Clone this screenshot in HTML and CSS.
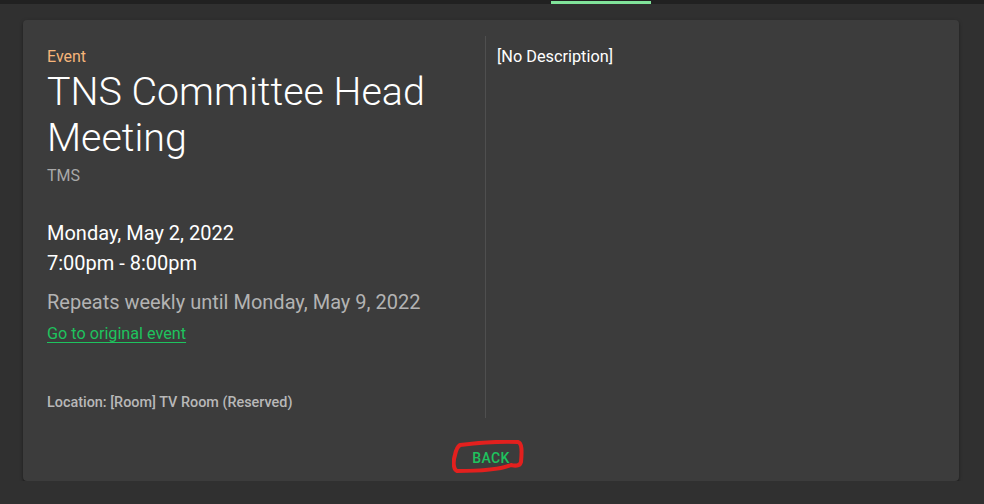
FILE: index.html
```html
<!DOCTYPE html>
<html>
<head>
    <title>TNS Committee Head Meeting</title>
    <link rel="stylesheet" href="styles.css">
</head>
<body>
    <div class="topbar">
        <div class="tab-indicator"></div>
    </div>

    <div class="page">
        <div class="card">
            <div class="card-row">
                <div class="col-left">
                    <div class="kind">Event</div>
                    <h1 class="title">TNS Committee Head Meeting</h1>
                    <div class="org">TMS</div>

                    <div class="date">Monday, May 2, 2022</div>
                    <div class="time">7:00pm - 8:00pm</div>
                    <div class="repeats">Repeats weekly until Monday, May 9, 2022</div>
                    <a class="orig-link" href="#">Go to original event</a>

                    <div class="location">Location: [Room] TV Room (Reserved)</div>
                </div>
                <div class="col-right">
                    <div class="desc">[No Description]</div>
                </div>
            </div>

            <div class="card-actions">
                <button class="btn-back">Back</button>
            </div>

            <svg class="scribble" width="74" height="36" viewBox="0 0 74 36">
                <path d="M8 5 C 25 3, 48 1, 66 2 C 70 3, 70 11, 69 22 C 68 26, 63 26, 59 25 C 50 29, 30 31, 5 31 C 1 29, 1 21, 3 15 C 4 10, 5 7, 8 5"
                      fill="none" stroke="#e3201e" stroke-width="4" stroke-linecap="round" stroke-linejoin="round"/>
            </svg>
        </div>
    </div>
</body>
</html>
```

FILE: styles.css
```css
body {
    margin: 0;
    background: #303030;
    font-family: Roboto, "Noto Sans", Arial, sans-serif;
    color: #fff;
}
.topbar {
    height: 4px;
    background: #212121;
    padding-top: 1px;
    box-sizing: border-box;
}
.tab-indicator {
    margin-left: 551px;
    width: 100px;
    height: 3px;
    background: #80e39a;
}
.page {
    padding: 16px 25px 0 23px;
}
.card {
    position: relative;
    background: #3c3c3c;
    border-radius: 4px;
    padding: 16px 24px 5px 24px;
    box-shadow: 0 2px 2px rgba(0, 0, 0, 0.35), 0 1px 4px rgba(0, 0, 0, 0.2);
}
.card-row {
    display: flex;
    height: 382px;
}
.col-left {
    width: 438px;
    padding-top: 9px;
    border-right: 1px solid #4f4f4f;
    display: flex;
    flex-direction: column;
    align-items: flex-start;
}
.col-right {
    flex: 1;
    padding: 9px 0 0 11px;
}
.kind {
    font-size: 16px;
    line-height: 24px;
    color: #f6b57a;
}
.title {
    margin: 0;
    font-size: 39.4px;
    font-weight: 300;
    line-height: 46px;
    color: #fff;
}
.org {
    margin-top: 3px;
    font-size: 16px;
    line-height: 24px;
    color: #a8a8a8;
}
.date {
    margin-top: 30px;
    font-size: 20px;
    line-height: 30px;
    color: #fff;
}
.time {
    font-size: 20px;
    line-height: 30px;
    color: #fff;
}
.repeats {
    margin-top: 9px;
    font-size: 20px;
    line-height: 30px;
    color: #b3b3b3;
}
.orig-link {
    margin-top: 5px;
    font-size: 16.2px;
    line-height: 24px;
    color: #1ec35e;
    text-decoration: underline;
    text-decoration-thickness: 1px;
    text-underline-offset: 3px;
}
.location {
    margin-top: 47px;
    font-size: 14.4px;
    line-height: 20px;
    font-weight: 500;
    color: #b8b8b8;
}
.desc {
    font-size: 16.3px;
    line-height: 24px;
    color: #fff;
}
.card-actions {
    display: flex;
    justify-content: center;
    margin-top: 22px;
}
.btn-back {
    height: 36px;
    padding: 0 16px;
    background: none;
    border: none;
    font-family: Roboto, "Noto Sans", Arial, sans-serif;
    font-size: 14px;
    font-weight: 500;
    letter-spacing: 0.4px;
    text-transform: uppercase;
    color: #1ec35e;
}
.scribble {
    position: absolute;
    left: 429px;
    top: 420px;
}
```
